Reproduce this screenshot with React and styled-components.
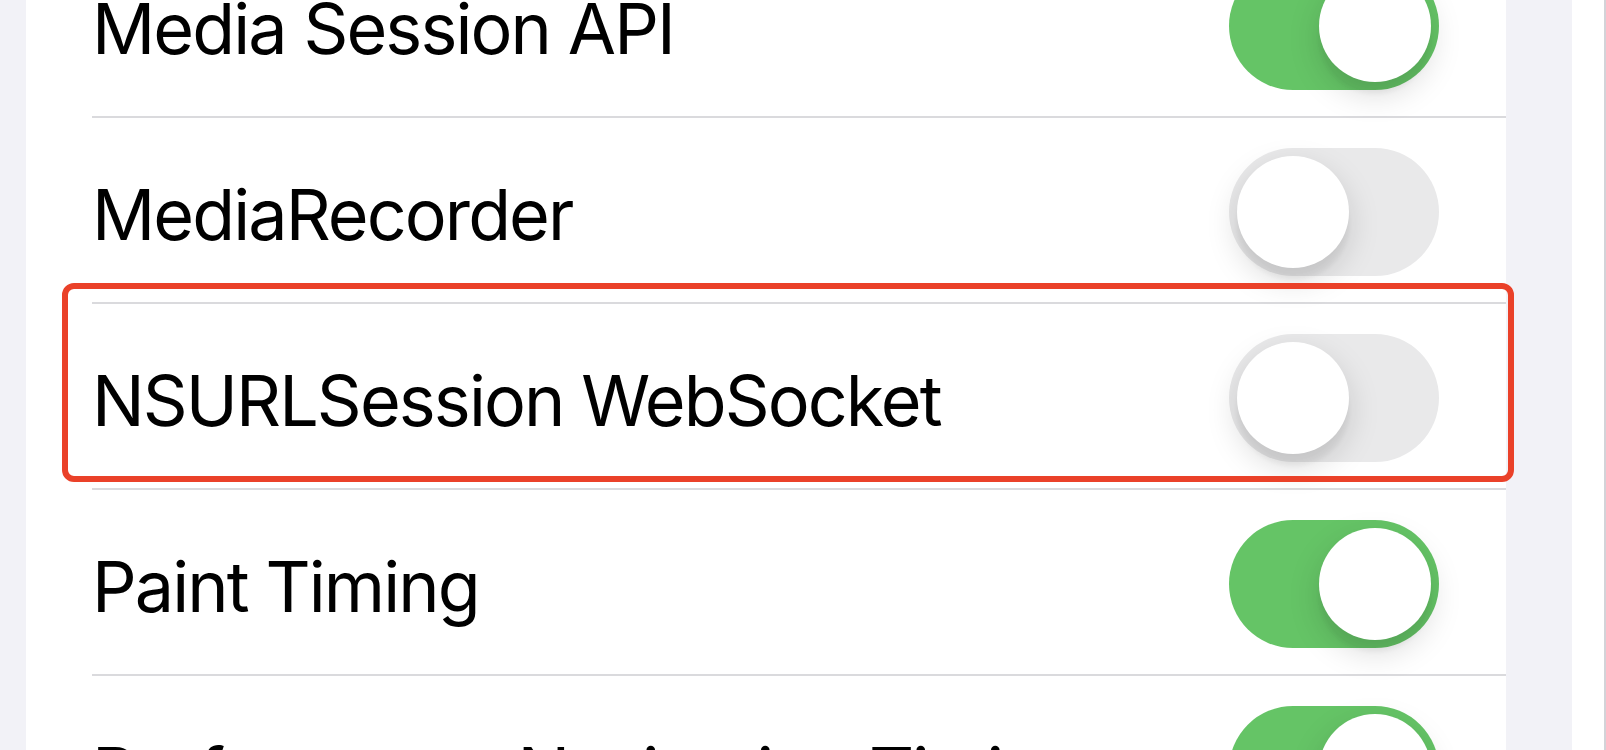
import React from 'react';
import styled, {createGlobalStyle} from 'styled-components';

const GlobalStyle = createGlobalStyle`
    html, body {
        margin: 0;
        padding: 0;
        background: #f2f2f7;
    }
    body {
        font-family: Inter, 'Noto Sans', 'Liberation Sans', sans-serif;
    }
`;

const Screen = styled.div`
    display: flex;
    width: 1606px;
    height: 750px;
    overflow: hidden;
    background: #f2f2f7;
`;

const Gutter = styled.div`
    flex: 0 0 ${props=>props.width};
    background: #f2f2f7;
`;

const ScrollTrack = styled.div`
    flex: 0 0 32px;
    background: #ffffff;
    border-right: 2px solid #d3d3d8;
`;

const Card = styled.div`
    flex: 0 0 1480px;
    background: #ffffff;
    display: flex;
    flex-direction: column;
    margin-top: -68px;
`;

const Row = styled.div`
    position: relative;
    height: 186px;
    padding-left: 66px;
    box-sizing: border-box;
    flex-shrink: 0;
`;

const RowInner = styled.div`
    height: 100%;
    display: flex;
    align-items: center;
    justify-content: space-between;
    padding-right: 67px;
    border-bottom: 2px solid #dadadd;
    box-sizing: border-box;
`;

const Label = styled.span`
    font-size: 70px;
    color: #000000;
    padding-top: 9px;
    letter-spacing: -1.9px;
    white-space: nowrap;
`;

const Track = styled.div`
    position: relative;
    width: 210px;
    height: 128px;
    margin-top: 3px;
    border-radius: 64px;
    background: ${props=>props.on ? '#65c466' : '#e9e9ea'};
    flex-shrink: 0;
`;

const Knob = styled.div`
    position: absolute;
    top: 8px;
    left: ${props=>props.on ? '90px' : '8px'};
    width: 112px;
    height: 112px;
    border-radius: 50%;
    background: #ffffff;
    box-shadow: 0 12px 32px rgba(0,0,0,0.15), 0 12px 4px rgba(0,0,0,0.04);
`;

const Highlight = styled.div`
    position: absolute;
    top: -21px;
    bottom: 8px;
    left: 36px;
    right: -8px;
    border: 6px solid #ea4129;
    border-radius: 12px;
    pointer-events: none;
`;

const Toggle = ({on}) => <Track on={on}>
    <Knob on={on} />
</Track>

const items = [
    {label: 'Media Session API', on: true},
    {label: 'MediaRecorder', on: false},
    {label: 'NSURLSession WebSocket', on: false, marked: true},
    {label: 'Paint Timing', on: true},
    {label: 'Performance Navigation Timing', on: true},
];

const App = () => {
    return <>
        <GlobalStyle />
        <Screen>
            <Gutter width="26px" />
            <Card>
                {items.map(item =>
                    <Row key={item.label}>
                        <RowInner>
                            <Label>{item.label}</Label>
                            <Toggle on={item.on} />
                        </RowInner>
                        {item.marked && <Highlight />}
                    </Row>
                )}
            </Card>
            <Gutter width="66px" />
            <ScrollTrack />
        </Screen>
    </>
}

export default App;
